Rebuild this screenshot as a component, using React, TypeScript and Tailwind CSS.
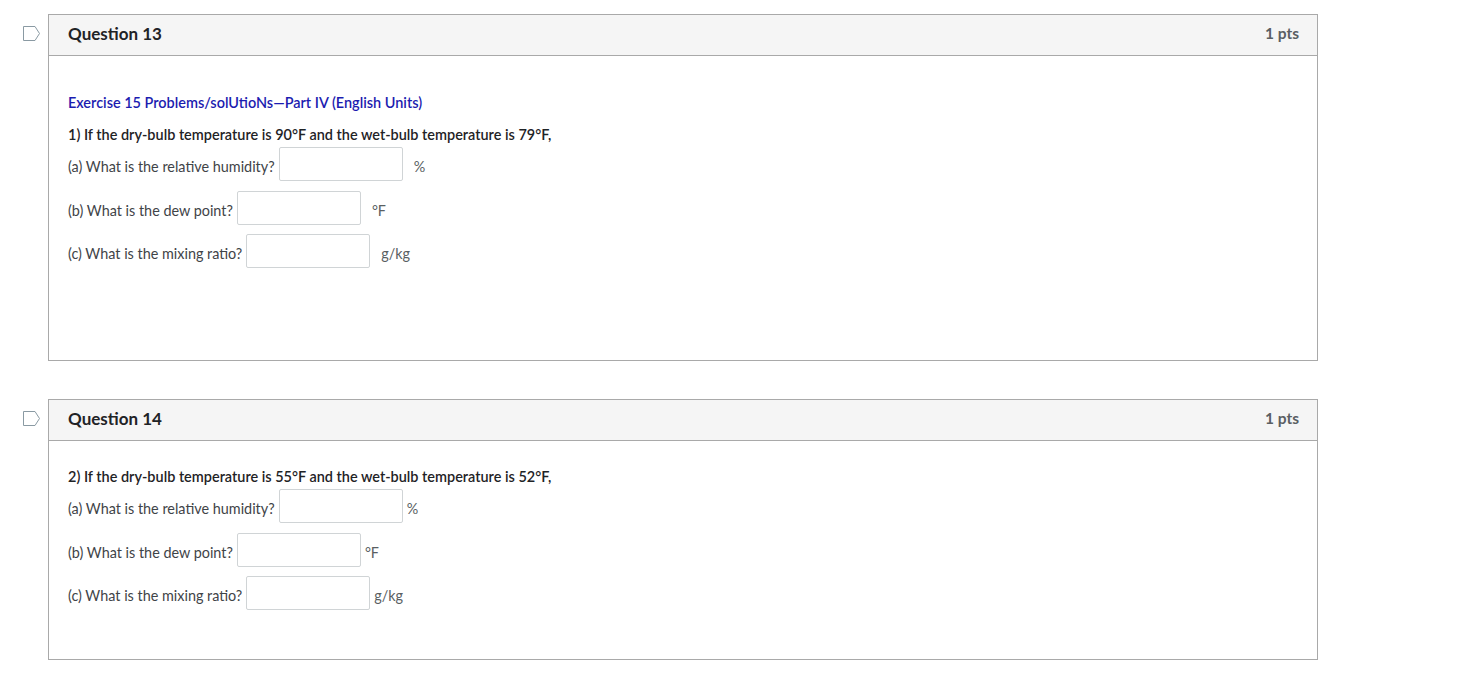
import React from "react";

type Row = { label: string; unit: string };

function Flag() {
  return (
    <svg width="19" height="17" viewBox="0 0 19 17" className="absolute left-[-27px] top-[10px]" fill="none">
      <path d="M1.5 1.5 H13 L17.5 8.5 L13 15.5 H1.5 Z" stroke="#8a9aa3" strokeWidth="1" fill="#ffffff" />
    </svg>
  );
}

function AnswerRow({ label, unit, unitGap }: Row & { unitGap: string }) {
  return (
    <div className="flex items-center h-[34px]">
      <span className="text-[14.4px] text-[#3f4448] mr-[4px] pt-[6px]">{label}</span>
      <div className="w-[124px] h-[34px] bg-white border border-[#d0d4d6] rounded-[2px]" />
      <span className={`text-[14.4px] text-[#5a5f63] pt-[6px] ${unitGap}`}>{unit}</span>
    </div>
  );
}

function Question({
  title,
  heightClass,
  bodyPadding,
  intro,
  prompt,
  unitGap,
  rows,
}: {
  title: string;
  heightClass: string;
  bodyPadding: string;
  intro?: string;
  prompt: string;
  unitGap: string;
  rows: Row[];
}) {
  return (
    <section className={`relative w-[1270px] border border-[#a9a9a9] ${heightClass}`}>
      <Flag />
      <header className="h-[41px] bg-[#f5f5f5] border-b border-[#a9a9a9] flex items-center justify-between pl-[19px] pr-[18px] pb-[2px]">
        <h2 className="text-[17px] font-bold text-[#1f2326]">{title}</h2>
        <span className="text-[15.5px] font-bold text-[#5a5f63] pb-[1px]">1 pts</span>
      </header>
      <div className={`pl-[19px] ${bodyPadding}`}>
        {intro && <p className="text-[14.46px] font-semibold text-[#1c1cb0] leading-[20px] mb-[12px]">{intro}</p>}
        <p className="text-[14.46px] font-semibold text-[#1f2326] leading-[20px] mb-[2px]">{prompt}</p>
        <div className="flex flex-col gap-[9.5px]">
          {rows.map((r) => (
            <AnswerRow key={r.label} {...r} unitGap={unitGap} />
          ))}
        </div>
      </div>
    </section>
  );
}

const rows: Row[] = [
  { label: "(a) What is the relative humidity?", unit: "%" },
  { label: "(b) What is the dew point?", unit: "°F" },
  { label: "(c) What is the mixing ratio?", unit: "g/kg" },
];

export default function App() {
  return (
    <div className="w-[1472px] h-[680px] bg-white pt-[14px] pl-[48px] flex flex-col gap-[38px] font-['Lato',sans-serif] overflow-hidden">
      <Question
        title="Question 13"
        heightClass="h-[347px]"
        bodyPadding="pt-[37px]"
        intro="Exercise 15 Problems/solUtioNs—Part IV (English Units)"
        prompt="1) If the dry-bulb temperature is 90°F and the wet-bulb temperature is 79°F,"
        unitGap="ml-[11px]"
        rows={rows}
      />
      <Question
        title="Question 14"
        heightClass="h-[261px]"
        bodyPadding="pt-[26px]"
        prompt="2) If the dry-bulb temperature is 55°F and the wet-bulb temperature is 52°F,"
        unitGap="ml-[4px]"
        rows={rows}
      />
    </div>
  );
}
